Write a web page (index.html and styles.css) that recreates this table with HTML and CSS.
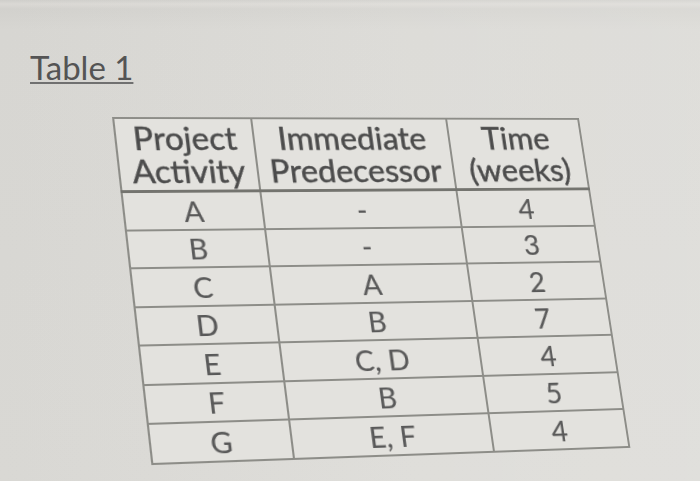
FILE: index.html
```html
<!DOCTYPE html>
<html lang="en">
<head>
<meta charset="utf-8">
<title>Table 1</title>
<link rel="stylesheet" href="styles.css">
</head>
<body>
<div class="page">
  <h1 class="title">Table 1</h1>
  <div class="sheet">
    <table class="grid">
      <colgroup>
        <col class="c1"><col class="c2"><col class="c3">
      </colgroup>
      <thead>
        <tr class="head">
          <th>Project<br>Activity</th>
          <th>Immediate<br>Predecessor</th>
          <th>Time<br>(weeks)</th>
        </tr>
      </thead>
      <tbody>
        <tr class="r-a"><td>A</td><td class="pred">-</td><td class="num">4</td></tr>
        <tr class="r-b"><td>B</td><td class="pred">-</td><td class="num">3</td></tr>
        <tr class="r-a"><td>C</td><td class="pred">A</td><td class="num">2</td></tr>
        <tr class="r-b"><td>D</td><td class="pred">B</td><td class="num">7</td></tr>
        <tr class="r-a"><td>E</td><td class="pred">C, D</td><td class="num">4</td></tr>
        <tr class="r-b"><td>F</td><td class="pred">B</td><td class="num">5</td></tr>
        <tr class="r-a"><td>G</td><td class="pred">E, F</td><td class="num">4</td></tr>
      </tbody>
    </table>
  </div>
</div>
</body>
</html>
```
FILE: styles.css
```css
html, body {
  margin: 0;
  padding: 0;
}
body {
  width: 700px;
  height: 481px;
  overflow: hidden;
  background:
    linear-gradient(180deg, #d3d2ce 0px, #dedcd8 4px, #d6d5d1 9px, #dbdad6 30px, #dddcd8 100%);
  font-family: Lato, "Open Sans", sans-serif;
  color: #565656;
}
.page {
  height: 481px;
  background: linear-gradient(90deg, rgba(0,0,0,0.02) 0%, rgba(255,255,255,0.06) 60%, rgba(255,255,255,0.1) 100%);
}
.title {
  margin: 0;
  padding: 52px 0 0 30px;
  font-size: 33px;
  line-height: 30px;
  font-weight: 400;
  color: #545454;
  text-decoration: underline;
  text-decoration-thickness: 2px;
  text-underline-offset: 2px;
  text-decoration-color: #707070;
}
.sheet {
  margin: 35px 0 0 112px;
  width: 465px;
  height: 345px;
  transform-origin: 0 0;
  transform: matrix3d(1.05344, 0.002267, 0, 0.00011492, 0.10957, 0.96913, 0, -0.00008948, 0, 0, 1, 0, 0, 0, 0, 1);
  filter: blur(0.45px);
}
.grid {
  width: 465px;
  height: 345px;
  table-layout: fixed;
  border-collapse: collapse;
  background: #e3e2de;
  border: 2px solid #85857f;
}
.c1 { width: 133px; }
.c2 { width: 195px; }
.c3 { width: 137px; }
.grid th, .grid td {
  border: 2px solid #8d8d88;
  padding: 0;
  text-align: center;
  vertical-align: middle;
  overflow: hidden;
  white-space: nowrap;
}
.head th {
  height: 73px;
  font-size: 32px;
  line-height: 34px;
  font-weight: 400;
  color: #4c4c4c;
  border-bottom: 3px solid #74746f;
  -webkit-text-stroke: 0.5px #4c4c4c;
}
.grid td {
  font-size: 28px;
  line-height: 30px;
  color: #595959;
  -webkit-text-stroke: 0.2px #595959;
}
.r-a td { height: 37px; }
.r-b td { height: 36px; }
.pred { padding-right: 11px; }
.num { padding-left: 55px; }
```
